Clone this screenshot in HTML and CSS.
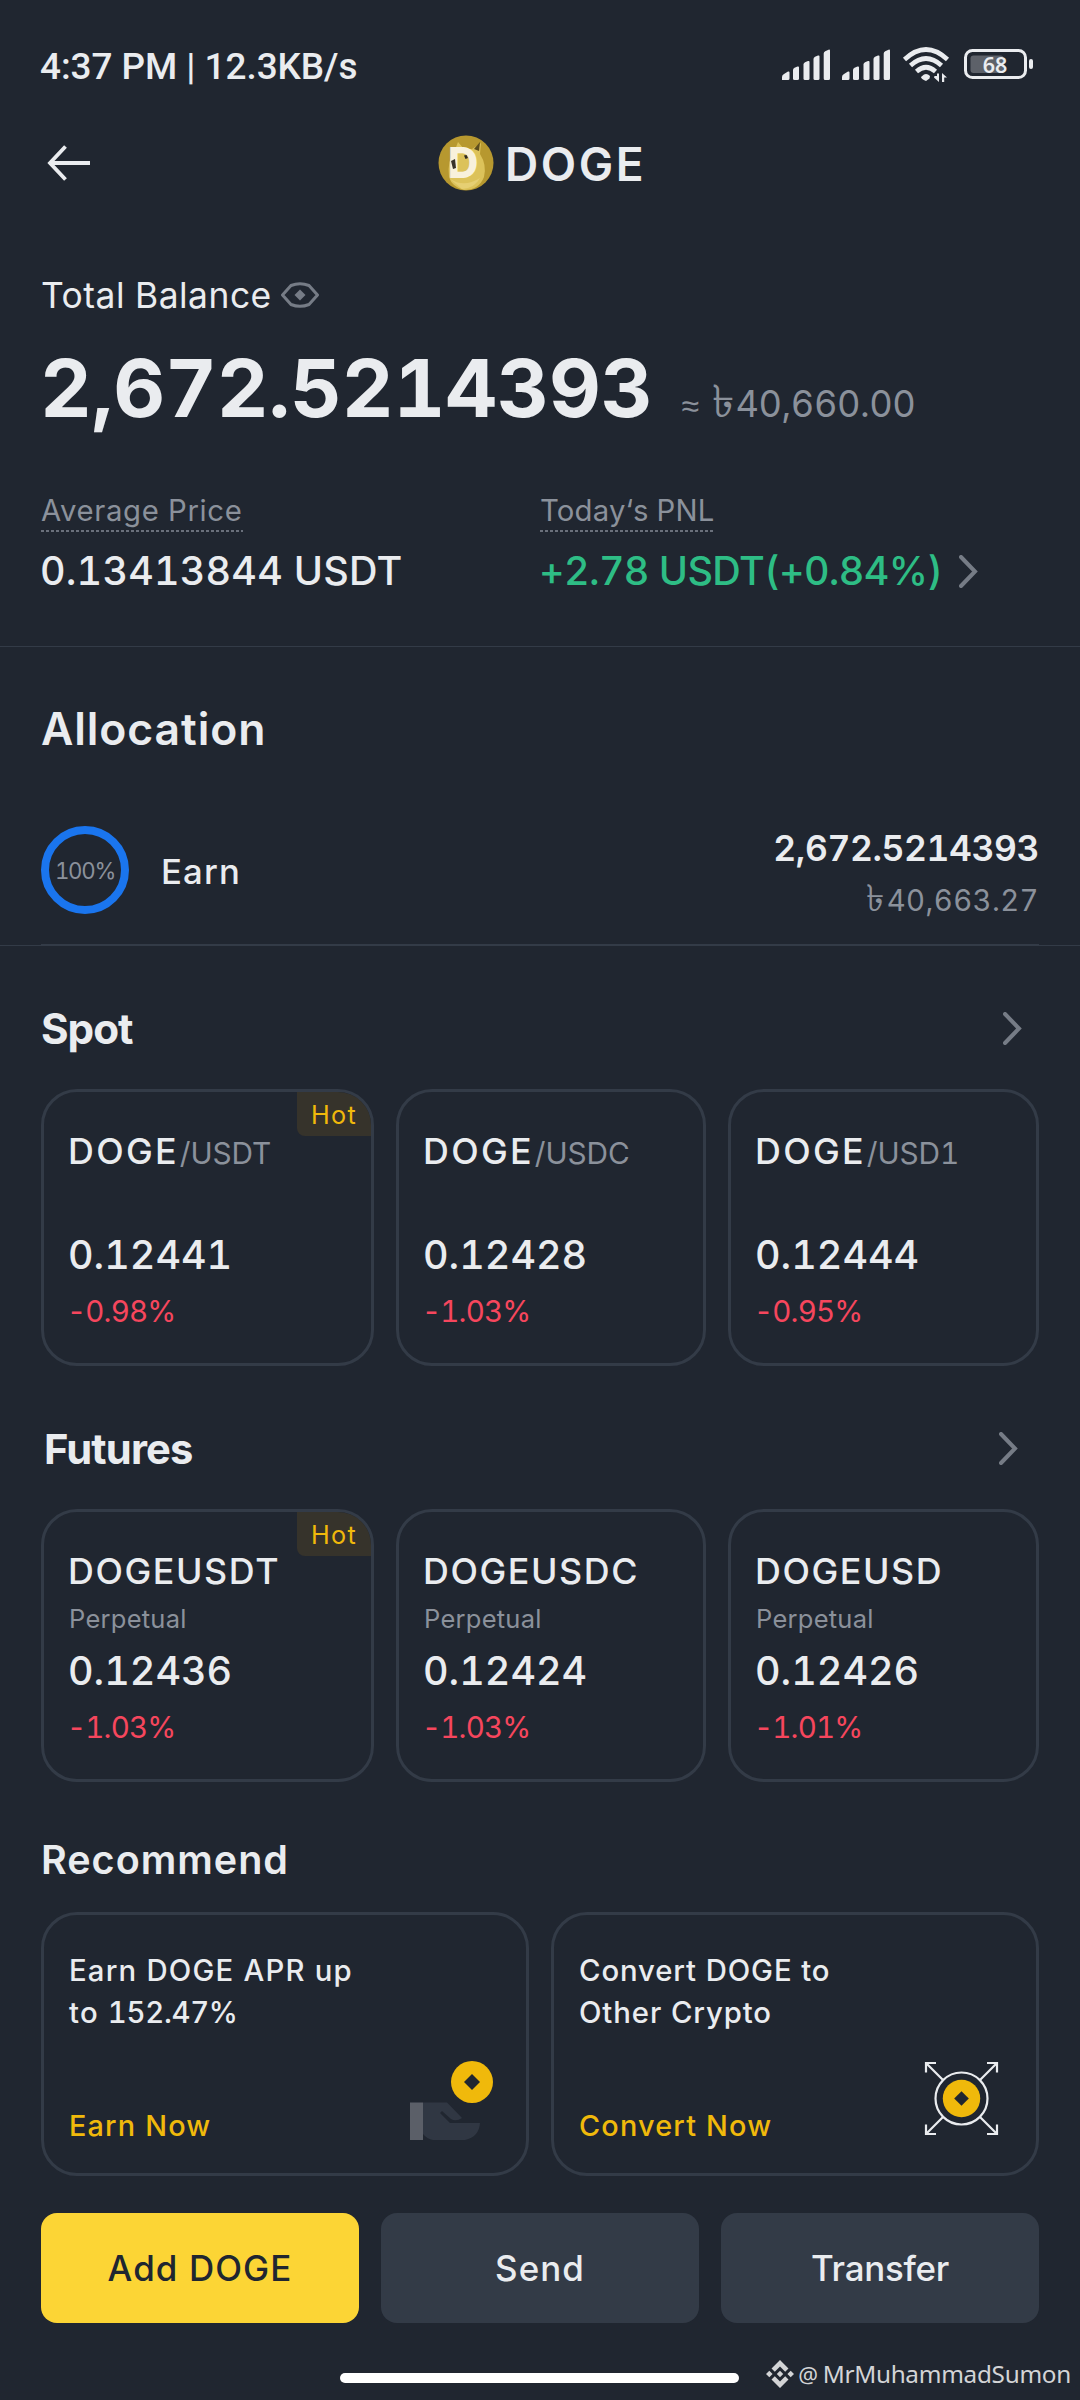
FILE: index.html
```html
<!DOCTYPE html>
<html lang="en">
<head>
<meta charset="utf-8">
<title>DOGE</title>
<link rel="stylesheet" href="styles.css">
</head>
<body>
<div class="screen">
  <div class="status">
    <span class="status-time">4:37 PM | 12.3KB/s</span>
    <svg class="status-icons" width="252" height="38" viewBox="782 46 252 38">
      <g fill="#eaecef">
        <g id="signal">
          <path d="M782 80v-3q0-2 2-3l4-2.500q1.500-.5 1.500 1v6q0 1.500-1.500 1.500h-5q-1 0-1 0z"/>
          <path d="M793 70q0-1.500 1.500-2.200l3-1.300q1.500-.5 1.500 1v11q0 1.500-1.500 1.500h-3q-1.500 0-1.500-1.500z"/>
          <path d="M803.500 64.500q0-1.500 1.500-2.200l3-1.300q1.500-.5 1.500 1v16.500q0 1.500-1.500 1.500h-3q-1.500 0-1.500-1.500z"/>
          <path d="M813.500 59q0-1.500 1.500-2.200l3-1.300q1.500-.5 1.500 1v22q0 1.500-1.500 1.500h-3q-1.500 0-1.500-1.500z"/>
          <path d="M823.700 53.500q0-1.500 1.500-2.200l3.300-1.600q1.500-.5 1.500 1v27.800q0 1.500-1.500 1.500h-3.300q-1.500 0-1.500-1.500z"/>
        </g>
        <use href="#signal" x="60"/>
        <path d="M921 77l3-2.600q2-.9 4 0l2 1.600-.5 2.500-3.500 2.500q-5-2-5-4z"/>
        <path d="M934.500 76h2.500v-2.500l2 0v8.500l-5-4.500zM942 82v-9l5 4.500h-2.800v4.500z"/>
        <rect x="1029" y="59" width="4" height="10" rx="2"/>
      </g>
      <g fill="none" stroke="#eaecef" stroke-width="4.600">
        <path d="M904.500 59.500q21.500-20 43 0"/>
        <path d="M910.500 65.500q15.500-14 31 0"/>
        <path d="M916.500 71.500q9.500-8.500 19 0"/>
        <rect x="965.500" y="50.500" width="60" height="27" rx="7" stroke-width="3"/>
      </g>
      <rect x="970.500" y="55.500" width="33" height="17.500" rx="3" fill="#5d6169"/>
      <text x="995" y="72.500" class="battery-text">68</text>
    </svg>
  </div>

  <div class="nav">
    <svg class="nav-back" width="44" height="36" viewBox="0 0 44 36" fill="none" stroke="#eaecef" stroke-width="3.800"><path d="M18.500 1.500L3 18l15.500 16.500M3 18h40"/></svg>
    <svg class="coin" width="56" height="56" viewBox="0 0 56 56">
      <circle cx="28" cy="28" r="27.500" fill="#b7982f"/>
      <path d="M11 42Q9 25 17 15l3-8 6 7h8l9-6-1 11q7 11 4 23-5 13-20 13-12-3-15-13z" fill="#dcc25a"/>
      <path d="M36 14l6-7-1 9z" fill="#5d4d1d"/>
      <path d="M13 26l5-2v11l-4-2z" fill="#2f2a20"/>
      <text x="10" y="43" class="coin-letter">D</text>
      <path d="M13 26l4-2 1 9-3 1z" fill="#37312a"/>
      <path d="M26 20.500l2.500-.5 1.500 3-2.500 1z" fill="#2f2a20"/>
      <path d="M12 44q14 9 30-1-5 10-18 11z" fill="#e6cf73"/>
    </svg>
    <span class="nav-title">DOGE</span>
  </div>

  <section class="balance">
    <div class="balance-label"><span>Total Balance</span>
      <svg width="40" height="28" viewBox="0 0 40 28"><path d="M2.500 14L11 4.500Q20 1 29 4.500L37.500 14 29 23.500Q20 27 11 23.500z" fill="none" stroke="#767c86" stroke-width="3" stroke-linejoin="round"/><path d="M20 8.500l5.500 5.500-5.500 5.500-5.500-5.500z" fill="#767c86"/></svg>
    </div>
    <div class="balance-row"><span class="balance-total">2,672.5214393</span><span class="approx">≈</span><span class="fiat"><span class="taka">৳</span>40,660.00</span></div>
    <div class="stats">
      <div>
        <div class="stat-label avg">Average Price</div>
        <div class="stat-value">0.13413844 USDT</div>
      </div>
      <div>
        <div class="stat-label today">Today‘s PNL</div>
        <div class="stat-value pnl"><span>+2.78 USDT(+0.84%)</span>
          <svg class="chevron" width="19" height="33" viewBox="0 0 19 33"><path d="M2 2l14 14.500L2 31"/></svg>
        </div>
      </div>
    </div>
  </section>

  <section class="allocation">
    <h2 class="alloc-title">Allocation</h2>
    <div class="alloc-row">
      <div class="ring">100%</div>
      <div class="alloc-name">Earn</div>
      <div class="alloc-values">
        <div class="alloc-amount">2,672.5214393</div>
        <div class="alloc-fiat"><span class="taka">৳</span>40,663.27</div>
      </div>
    </div>
  </section>

  <section class="market">
    <div class="section-head"><h2>Spot</h2><svg class="chevron" width="19" height="33" viewBox="0 0 19 33"><path d="M2 2l14 14.500L2 31"/></svg></div>
    <div class="cards spot">
      <div class="card"><span class="hot">Hot</span><div class="pair">DOGE<span>/USDT</span></div><div class="price">0.12441</div><div class="change">-0.98%</div></div>
      <div class="card"><div class="pair">DOGE<span>/USDC</span></div><div class="price">0.12428</div><div class="change">-1.03%</div></div>
      <div class="card"><div class="pair">DOGE<span>/USD1</span></div><div class="price">0.12444</div><div class="change">-0.95%</div></div>
    </div>
  </section>

  <section class="market">
    <div class="section-head futures-head"><h2>Futures</h2><svg class="chevron" width="19" height="33" viewBox="0 0 19 33"><path d="M2 2l14 14.500L2 31"/></svg></div>
    <div class="cards futures">
      <div class="card"><span class="hot">Hot</span><div class="pair">DOGEUSDT</div><div class="kind">Perpetual</div><div class="price">0.12436</div><div class="change">-1.03%</div></div>
      <div class="card"><div class="pair">DOGEUSDC</div><div class="kind">Perpetual</div><div class="price">0.12424</div><div class="change">-1.03%</div></div>
      <div class="card"><div class="pair">DOGEUSD</div><div class="kind">Perpetual</div><div class="price">0.12426</div><div class="change">-1.01%</div></div>
    </div>
  </section>

  <section class="recommend">
    <h2>Recommend</h2>
    <div class="promos">
      <div class="promo">
        <p>Earn DOGE APR up<br>to <span class="num">152.47%</span></p>
        <div class="promo-foot"><span>Earn Now</span>
          <svg width="84" height="82" viewBox="410 2060 84 82">
            <rect x="410" y="2102.500" width="13" height="37.500" fill="#5b5f68"/>
            <path d="M423 2102.500h24l15 15.500q-6 4-11 1l-9-8-2 2 10 10h30q-1 14-15 17h-32q-6-1-10-6z" fill="#303743"/>
            <circle cx="472" cy="2082" r="21" fill="#f0b90b"/>
            <path d="M472 2074l8 8-8 8-8-8z" fill="#202630"/>
          </svg>
        </div>
      </div>
      <div class="promo">
        <p class="convert-text">Convert DOGE to<br>Other Crypto</p>
        <div class="promo-foot"><span>Convert Now</span>
          <svg width="80" height="82" viewBox="924 2060 80 82">
            <g fill="none" stroke="#eaecef" stroke-width="2.200">
              <circle cx="961.500" cy="2098.500" r="26"/>
              <path d="M943 2080l-17-17M926 2072.500V2063h10M980 2080l17-17M987 2063h10v9.500M943 2117l-17 17M926 2124.500v9.500h10M980 2117l17 17M987 2134h10v-9.500"/>
            </g>
            <circle cx="961.500" cy="2098.500" r="18.700" fill="#f0b90b"/>
            <path d="M961.500 2091.200l7.300 7.300-7.300 7.300-7.300-7.300z" fill="#202630"/>
          </svg>
        </div>
      </div>
    </div>
  </section>

  <div class="actions">
    <div class="btn primary">Add DOGE</div>
    <div class="btn">Send</div>
    <div class="btn transfer">Transfer</div>
  </div>
  <div class="home-bar"></div>

  <div class="watermark">
    <svg width="28" height="28" viewBox="0 0 28 28" fill="#d3d4d6"><path d="M14 0l8.500 8.500-3.300 3.300L14 6.600l-5.200 5.200-3.300-3.300zM14 28l8.500-8.500-3.300-3.300L14 21.400l-5.200-5.200-3.300 3.300zM14 10.800l3.200 3.200-3.200 3.200-3.200-3.200zM3.300 10.700L6.600 14l-3.300 3.300L0 14zM24.700 10.700L28 14l-3.300 3.300-3.300-3.300z"/></svg>
    <span class="at">@</span><span>MrMuhammadSumon</span>
  </div>
</div>
</body>
</html>
```
FILE: styles.css
```css
* { box-sizing: border-box; }
body { margin: 0; background: #202630; }
h2, p { margin: 0; }
svg { display: block; flex: none; }

.screen {
  position: relative;
  width: 1080px;
  height: 2400px;
  overflow: hidden;
  background: #202630;
  color: #eaecef;
  font-family: Inter, sans-serif;
  font-variant-numeric: tabular-nums;
  white-space: nowrap;
}

.status {
  display: flex;
  justify-content: space-between;
  height: 88px;
  padding: 44px 46px 0 40px;
}
.status-time { font-family: Roboto, sans-serif; font-size: 36.9px; font-weight: 500; line-height: 45px; letter-spacing: -0.05px; }
.status-icons { margin-top: 2px; }
.battery-text { font-family: "Noto Sans", sans-serif; font-size: 21.5px; font-weight: 600; fill: #eaecef; text-anchor: middle; }

.nav {
  display: grid;
  grid-template-columns: 391px 56px auto;
  align-items: center;
  height: 149px;
  padding-left: 47px;
}
.nav-title {
  padding: 2px 0 0 11px;
  font-size: 46px;
  font-weight: 600;
  line-height: 50px;
  letter-spacing: 2.6px;
}
.coin-letter { font-size: 42px; font-weight: 800; fill: #f8f1dc; }

.balance { height: 410px; padding: 36px 41px 0; border-bottom: 1px solid #333b47; }
.balance-label { display: flex; align-items: center; height: 44px; gap: 8px; font-size: 35.4px; line-height: 46px; letter-spacing: 0.5px; }
.balance-label span { padding-top: 2px; }
.balance-row { display: flex; align-items: baseline; height: 96px; margin-top: 20px; }
.balance-total { margin-left: -1px; font-size: 80.3px; font-weight: 700; line-height: 101px; letter-spacing: -0.13px; }
.approx { margin-left: 29px; color: #8b919b; font-family: "Noto Sans", sans-serif; font-size: 32px; line-height: 40px; }
.fiat { margin-left: 13px; color: #8b919b; font-size: 36.3px; line-height: 44px; letter-spacing: -0.5px; }
.taka { margin-right: 2px; font-size: 1.25em; line-height: 1; }

.stats { display: grid; grid-template-columns: 499px 1fr; margin-top: 58px; }
.stat-label {
  width: max-content;
  height: 41px;
  color: #8b919b;
  font-size: 29.3px;
  line-height: 39px;
  letter-spacing: 0.68px;
  background: repeating-linear-gradient(90deg, #6a707b 0 3px, transparent 3px 5px) 0 39px / 100% 2px no-repeat;
}
.today { letter-spacing: 0.2px; }
.stat-value { margin: 14px 0 0 -1px; font-size: 39.5px; font-weight: 500; line-height: 50px; letter-spacing: 0.2px; }
.pnl { display: flex; align-items: center; gap: 17px; color: #2ebd85; letter-spacing: -0.63px; }

.chevron { fill: none; stroke: #767c86; stroke-width: 4; stroke-linecap: round; }

.allocation { border-bottom: 1px solid #333b47; padding: 54px 41px 0; }
.alloc-title { height: 54px; font-size: 44.5px; font-weight: 600; line-height: 56px; letter-spacing: 0.9px; }
.alloc-row { display: flex; height: 120px; margin-top: 70px; border-bottom: 1px solid #333b47; }
.ring {
  width: 88px;
  height: 88px;
  margin-top: 1px;
  border: 8px solid #1a75ee;
  border-radius: 50%;
  color: #8b919b;
  font-size: 22.3px;
  line-height: 73px;
  letter-spacing: -1.3px;
  text-align: center;
}
.alloc-name { margin: 23px 0 0 32px; font-size: 34.7px; font-weight: 500; line-height: 46px; letter-spacing: 1.2px; }
.alloc-values { margin-left: auto; text-align: right; }
.alloc-amount { height: 46px; font-size: 35.4px; font-weight: 600; line-height: 48px; letter-spacing: -0.4px; }
.alloc-fiat { height: 38px; margin-top: 9px; color: #8b919b; font-size: 29.3px; line-height: 37px; letter-spacing: 0.4px; }

.section-head { display: flex; align-items: center; justify-content: space-between; height: 108px; padding: 56px 58px 0 41px; }
.section-head h2 { font-size: 42.2px; font-weight: 700; line-height: 50px; letter-spacing: -1.04px; padding-top: 2px; }
.futures-head { padding: 56px 62px 0 44px; }
.futures-head h2 { font-size: 41.7px; letter-spacing: -0.82px; }
.cards { display: grid; grid-template-columns: 333px 310px 311px; gap: 22px; padding: 35px 41px 0; }
.card, .promo { position: relative; border: 3px solid #333b47; border-radius: 36px; }
.card { padding: 36px 0 0 24px; }
.spot .card { height: 277px; }
.futures .card { height: 273px; }
.hot {
  position: absolute;
  top: 0;
  right: 0;
  width: 74px;
  height: 44px;
  padding-left: 14px;
  border-radius: 0 33px 0 8px;
  background: #36332b;
  color: #f0b90b;
  font-size: 25.2px;
  line-height: 46px;
  letter-spacing: 1.4px;
}
.pair { height: 44px; font-size: 35.8px; font-weight: 500; line-height: 46px; letter-spacing: 2.3px; }
.pair span { margin-left: 1px; color: #8b919b; font-size: 29.8px; font-weight: 400; letter-spacing: -0.1px; }
.futures .pair { letter-spacing: 1.6px; }
.kind { height: 32px; margin: 10px 0 0 1px; color: #8b919b; font-size: 25.5px; line-height: 34px; letter-spacing: 0.25px; }
.price { height: 48px; margin-top: 58px; font-size: 39.5px; font-weight: 500; line-height: 51px; letter-spacing: 0; }
.futures .price { margin-top: 12px; }
.change { margin: 14px 0 0 -1px; color: #f6465d; font-size: 29.5px; line-height: 38px; letter-spacing: -0.85px; }

.recommend { padding: 50px 41px 0; }
.recommend h2 { height: 52px; font-size: 39.5px; font-weight: 600; line-height: 56px; letter-spacing: 1px; }
.promos { display: grid; grid-template-columns: 1fr 1fr; gap: 22px; margin-top: 28px; }
.promo { height: 264px; padding: 35px 32px 0 25px; }
.promo p { height: 84px; font-size: 29.3px; font-weight: 500; line-height: 42px; letter-spacing: 1.2px; }
.promo .convert-text { letter-spacing: 0.9px; }
.promo .num { letter-spacing: -0.3px; }
.promo-foot { display: flex; align-items: flex-end; justify-content: space-between; height: 82px; margin-top: 26px; color: #f0b90b; font-size: 28.8px; font-weight: 500; line-height: 33px; letter-spacing: 1.2px; }

.actions { display: grid; grid-template-columns: repeat(3, 1fr); gap: 22px; padding: 37px 41px 0; }
.btn { height: 110px; border-radius: 16px; background: #333b47; font-size: 34.9px; font-weight: 500; line-height: 110px; letter-spacing: 1.1px; text-align: center; }
.primary { background: #fcd535; color: #202630; }
.transfer { letter-spacing: -0.27px; }
.home-bar { width: 399px; height: 10px; margin: 50px 0 0 340px; border-radius: 5px; background: #fff; }

.watermark { position: absolute; right: 9px; top: 2358px; display: flex; align-items: center; height: 32px; color: #d3d4d6; font-family: "Noto Sans", sans-serif; font-size: 24.3px; line-height: 32px; letter-spacing: -0.28px; }
.at { margin: 0 5px 0 4px; font-size: 22px; }
```
